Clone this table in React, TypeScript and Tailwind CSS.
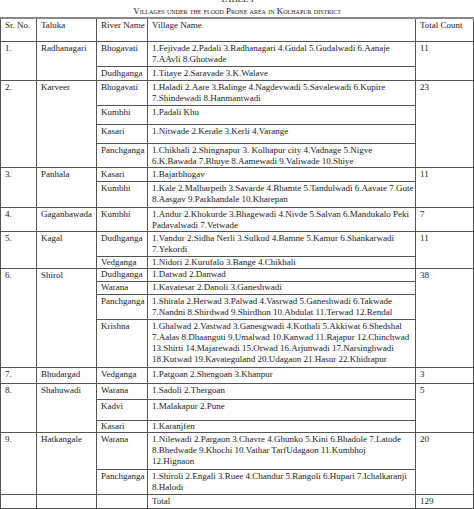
type River = { name: string; lines: string[]; h: string; tight?: boolean };
type Row = { sr: string; taluka: string; count: string; rivers: River[] };

const rows: Row[] = [
  {
    sr: "1.",
    taluka: "Radhanagari",
    count: "11",
    rivers: [
      { name: "Bhogavati", lines: ["1.Fejivade 2.Padali 3.Radhanagari 4.Gudal 5.Gudalwadi 6.Aanaje", "7.AAvli 8.Ghotwade"], h: "h-[25px]" },
      { name: "Dudhganga", lines: ["1.Titaye 2.Saravade 3.K.Walave"], h: "h-[14px]" },
    ],
  },
  {
    sr: "2.",
    taluka: "Karveer",
    count: "23",
    rivers: [
      { name: "Bhogavati", lines: ["1.Haladi 2.Aare 3.Balinge 4.Nagdevwadi 5.Savalewadi 6.Kupire", "7.Shindewadi 8.Hanmantwadi"], h: "h-[25px]" },
      { name: "Kumbhi", lines: ["1.Padali Khu"], h: "h-[19px]" },
      { name: "Kasari", lines: ["1.Nitwade 2.Kerale 3.Kerli 4.Varange"], h: "h-[19px]" },
      { name: "Panchganga", lines: ["1.Chikhali 2.Shingnapur 3. Kolhapur city 4.Vadnage 5.Nigve", "6.K.Bawada 7.Bhuye 8.Aamewadi 9.Valiwade 10.Shiye"], h: "h-[24px]" },
    ],
  },
  {
    sr: "3.",
    taluka: "Panhala",
    count: "11",
    rivers: [
      { name: "Kasari", lines: ["1.Bajarbhogav"], h: "h-[14px]" },
      { name: "Kumbhi", lines: ["1.Kale 2.Malharpeth 3.Savarde 4.Bhamte 5.Tandulwadi 6.Aavate 7.Gote", "8.Aasgav 9.Parkhandale 10.Kharepan"], h: "h-[26px]" },
    ],
  },
  {
    sr: "4.",
    taluka: "Gaganbawada",
    count: "7",
    rivers: [
      { name: "Kumbhi", lines: ["1.Andur 2.Khokurde 3.Bhagewadi 4.Nivde 5.Salvan 6.Mandukalo Peki", "Padavalwadi 7.Vetwade"], h: "h-[23px]" },
    ],
  },
  {
    sr: "5.",
    taluka: "Kagal",
    count: "11",
    rivers: [
      { name: "Dudhganga", lines: ["1.Vandur 2.Sidha Nerli 3.Sulkud 4.Bamne 5.Kamur 6.Shankarwadi", "7.Yekordi"], h: "h-[25px]" },
      { name: "Vedganga", lines: ["1.Nidori 2.Kurufalo 3.Bange 4.Chikhali"], h: "h-[12px]", tight: true },
    ],
  },
  {
    sr: "6.",
    taluka: "Shirol",
    count: "38",
    rivers: [
      { name: "Dudhganga", lines: ["1.Datwad 2.Danwad"], h: "h-[13px]", tight: true },
      { name: "Warana", lines: ["1.Kavatesar 2.Danoli 3.Ganeshwadi"], h: "h-[13px]", tight: true },
      { name: "Panchganga", lines: ["1.Shirala 2.Herwad 3.Palwad 4.Vasrwad 5.Ganeshwadi 6.Takwade", "7.Nandni 8.Shirdwad 9.Shirdhon 10.Abdulat 11.Terwad 12.Rendal"], h: "h-[25px]" },
      {
        name: "Krishna",
        lines: [
          "1.Ghalwad 2.Vastwad 3.Ganesgwadi 4.Kothali 5.Akkiwat 6.Shedshal",
          "7.Aalas 8.Dhaanguti 9.Umalwad 10.Kanwad 11.Rajapur 12.Chinchwad",
          "13.Shirti 14.Majarewadi 15.Orwad 16.Arjunwadi 17.Narsinghwadi",
          "18.Kutwad 19.Kavateguland 20.Udagaon 21.Hasur 22.Khidrapur",
        ],
        h: "h-[48px]",
      },
    ],
  },
  {
    sr: "7.",
    taluka: "Bhudargad",
    count: "3",
    rivers: [{ name: "Vedganga", lines: ["1.Patgoan 2.Shengoan 3.Khanpur"], h: "h-[16px]" }],
  },
  {
    sr: "8.",
    taluka: "Shahuwadi",
    count: "5",
    rivers: [
      { name: "Warana", lines: ["1.Sadoli 2.Thergoan"], h: "h-[16px]" },
      { name: "Kadvi", lines: ["1.Malakapur 2.Pune"], h: "h-[21px]" },
      { name: "Kasari", lines: ["1.Karanjfen"], h: "h-[12px]", tight: true },
    ],
  },
  {
    sr: "9.",
    taluka: "Hatkangale",
    count: "20",
    rivers: [
      {
        name: "Warana",
        lines: ["1.Nilewadi 2.Pargaon 3.Chavre 4.Ghunko 5.Kini 6.Bhadole 7.Latode", "8.Bhedwade 9.Khochi 10.Vathar TarfUdagaon 11.Kumbhoj", "12.Hignaon"],
        h: "h-[37px]",
      },
      { name: "Panchganga", lines: ["1.Shiroli 2.Engali 3.Ruee 4.Chandur 5.Rangoli 6.Hupari 7.Ichalkaranji", "8.Halodi"], h: "h-[25px]" },
    ],
  },
];

const cell = "border border-[#555] align-top pl-[4px] pr-[2px] pb-0 whitespace-nowrap";
const sub = "border-t-[#8a8a8a]";

export default function App() {
  return (
    <div className="w-[474px] h-[509px] overflow-hidden bg-white text-[#222] font-['Liberation_Serif',serif] text-[9px] leading-[11px]">
      <div className="flex flex-col h-[17px] overflow-hidden text-center [font-variant-caps:small-caps]">
        <div className="h-[5px] overflow-hidden">
          <div className="-mt-[6px] leading-[10px]">TABLE I</div>
        </div>
        <div className="mt-[2px] leading-[9px]">Villages under the flood Prone area in Kolhapur district</div>
      </div>
      <table className="table-fixed border-collapse w-[473px]">
        <colgroup>
          <col className="w-[36px]" />
          <col className="w-[60px]" />
          <col className="w-[51px]" />
          <col className="w-[268px]" />
          <col className="w-[58px]" />
        </colgroup>
        <tbody>
          <tr className="h-[23px] border-t-2 border-t-[#888]">
            <td className={`${cell} pt-[1px]`}>Sr. No.</td>
            <td className={`${cell} pt-[1px]`}>Taluka</td>
            <td className={`${cell} pt-[1px]`}>River Name</td>
            <td className={`${cell} pt-[1px]`}>Village Name</td>
            <td className={`${cell} pt-[1px]`}>Total Count</td>
          </tr>
          {rows.map((r) =>
            r.rivers.map((rv, i) => {
              const pad = rv.tight ? "pt-0" : "pt-[1px]";
              return (
                <tr key={r.sr + i} className={rv.h}>
                  {i === 0 && (
                    <>
                      <td rowSpan={r.rivers.length} className={`${cell} pt-[1px]`}>
                        {r.sr}
                      </td>
                      <td rowSpan={r.rivers.length} className={`${cell} pt-[1px]`}>
                        {r.taluka}
                      </td>
                    </>
                  )}
                  <td className={`${cell} ${pad} ${i > 0 ? sub : ""}`}>{rv.name}</td>
                  <td className={`${cell} ${pad} ${i > 0 ? sub : ""}`}>
                    {rv.lines.map((l, k) => (
                      <div key={k}>{l}</div>
                    ))}
                  </td>
                  {i === 0 && (
                    <td rowSpan={r.rivers.length} className={`${cell} pt-[1px]`}>
                      {r.count}
                    </td>
                  )}
                </tr>
              );
            })
          )}
          <tr className="h-[14px]">
            <td className={`${cell} pt-[1px]`}></td>
            <td className={`${cell} pt-[1px]`}></td>
            <td className={`${cell} pt-[1px]`}></td>
            <td className={`${cell} pt-[1px]`}>Total</td>
            <td className={`${cell} pt-[1px]`}>129</td>
          </tr>
        </tbody>
      </table>
    </div>
  );
}
